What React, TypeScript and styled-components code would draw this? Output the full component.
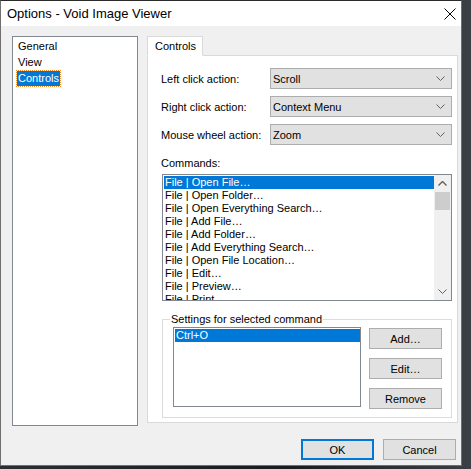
import React from 'react';
import styled, { createGlobalStyle } from 'styled-components';

const GlobalStyle = createGlobalStyle`
  html, body {
    margin: 0;
    padding: 0;
  }
  body {
    width: 471px;
    height: 469px;
    overflow: hidden;
    background: linear-gradient(90deg, #2a2f34 0%, #171b1f 60%, #3a4046 100%);
    font-family: "Liberation Sans", Arial, sans-serif;
    font-size: 11px;
    color: #000;
  }
`;

const Win = styled.div`
  width: 462px;
  height: 466px;
  box-sizing: border-box;
  border: 1px solid #6f6f6f;
  border-top-color: #2b2b2b;
  background: #f0f0f0;
  display: flex;
  flex-direction: column;
`;

const TitleBar = styled.div`
  height: 25px;
  flex: none;
  background: #fff;
  display: flex;
  align-items: center;
  justify-content: space-between;
  padding: 0 4px 0 6px;
  font-size: 13px;
`;

const CloseBtn = styled.div`
  width: 14px;
  height: 14px;
  display: flex;
  align-items: center;
  justify-content: center;
`;

const Body = styled.div`
  display: flex;
  gap: 9px;
  padding: 10px 3px 0 11px;
`;

const SideList = styled.ul`
  list-style: none;
  margin: 0;
  padding: 1px 4px;
  width: 126px;
  height: 390px;
  box-sizing: border-box;
  background: #fff;
  border: 1px solid #828790;
`;

const SideItem = styled.li<{ $active?: boolean }>`
  height: 16px;
  line-height: 16px;
  span {
    display: inline-block;
    padding: 0 1px;
    line-height: 15px;
    background: ${({ $active }) => ($active ? '#0078d7' : 'transparent')};
    color: ${({ $active }) => ($active ? '#fff' : '#000')};
    outline: ${({ $active }) => ($active ? '1px dotted #f08a24' : 'none')};
  }
`;

const TabArea = styled.div`
  width: 311px;
  display: flex;
  flex-direction: column;
`;

const Tab = styled.div`
  width: 56px;
  height: 20px;
  box-sizing: border-box;
  border: 1px solid #d9d9d9;
  border-bottom: 1px solid #fff;
  background: #fff;
  margin-bottom: -1px;
  position: relative;
  z-index: 1;
  padding-left: 7px;
  line-height: 19px;
`;

const Panel = styled.div`
  height: 368px;
  box-sizing: border-box;
  border: 1px solid #d9d9d9;
  background: #fff;
  padding: 12px 5px 0 13px;
`;

const ActionGrid = styled.div`
  display: grid;
  grid-template-columns: 109px 182px;
  grid-auto-rows: 21px;
  row-gap: 7px;
  align-items: center;
`;

const Combo = styled.div`
  height: 21px;
  box-sizing: border-box;
  border: 1px solid #adadad;
  background: #e1e1e1;
  display: flex;
  align-items: center;
  justify-content: space-between;
  padding: 0 6px 0 2px;
`;

const SectionLabel = styled.div`
  margin-top: 11px;
  height: 18px;
  line-height: 14px;
`;

const ListBox = styled.div<{ $w: number; $h: number; $indent?: number }>`
  width: ${({ $w }) => $w}px;
  height: ${({ $h }) => $h}px;
  margin-left: ${({ $indent }) => $indent ?? 0}px;
  flex: none;
  box-sizing: border-box;
  border: 1px solid #828790;
  background: #fff;
  display: flex;
  overflow: hidden;
`;

const Items = styled.div`
  flex: 1;
  padding: 1px 0 0 1px;
  overflow: hidden;
`;

const Row = styled.div<{ $selected?: boolean }>`
  height: 13px;
  line-height: 13px;
  padding-left: 1px;
  white-space: nowrap;
  background: ${({ $selected }) => ($selected ? '#0078d7' : 'transparent')};
  color: ${({ $selected }) => ($selected ? '#fff' : '#000')};
`;

const ScrollBar = styled.div`
  width: 17px;
  flex: none;
  background: #f0f0f0;
  display: flex;
  flex-direction: column;
`;

const ScrollArrow = styled.div`
  height: 17px;
  display: flex;
  align-items: center;
  justify-content: center;
`;

const Thumb = styled.div`
  height: 18px;
  margin: 0 1px;
  background: #cdcdcd;
`;

const Track = styled.div`
  flex: 1;
`;

const GroupBox = styled.fieldset`
  margin: 11px 0 0 1px;
  width: 290px;
  height: 106px;
  box-sizing: border-box;
  border: 1px solid #dcdcdc;
  padding: 1px 9px 0 10px;
  display: flex;
  gap: 8px;

  legend {
    padding: 0 1px;
    margin-left: -3px;
    line-height: 14px;
  }
`;

const ButtonColumn = styled.div`
  display: flex;
  flex-direction: column;
  gap: 9px;
  padding-top: 1px;
`;

const Button = styled.button<{ $default?: boolean }>`
  width: 73px;
  height: 21px;
  box-sizing: border-box;
  margin: 0;
  padding: 0;
  font-family: inherit;
  font-size: 11px;
  color: #000;
  background: #e1e1e1;
  border: ${({ $default }) => ($default ? '2px solid #0078d7' : '1px solid #adadad')};
`;

const Footer = styled.div`
  display: flex;
  justify-content: flex-end;
  gap: 9px;
  padding: 13px 5px 0 0;
`;

const Chevron: React.FC<{ up?: boolean }> = ({ up }) => (
  <svg width="9" height="5" viewBox="0 0 9 5">
    <polyline
      points={up ? '0.5,4.5 4.5,0.5 8.5,4.5' : '0.5,0.5 4.5,4.5 8.5,0.5'}
      fill="none"
      stroke="#606060"
      strokeWidth={up ? 1.4 : 1}
    />
  </svg>
);

const actions = [
  ['Left click action:', 'Scroll'],
  ['Right click action:', 'Context Menu'],
  ['Mouse wheel action:', 'Zoom'],
];

const commands = [
  'File | Open File…',
  'File | Open Folder…',
  'File | Open Everything Search…',
  'File | Add File…',
  'File | Add Folder…',
  'File | Add Everything Search…',
  'File | Open File Location…',
  'File | Edit…',
  'File | Preview…',
  'File | Print…',
];

export default function App() {
  return (
    <>
      <GlobalStyle />
      <Win>
        <TitleBar>
          <span>Options - Void Image Viewer</span>
          <CloseBtn>
            <svg width="12" height="12" viewBox="0 0 12 12">
              <path d="M0.5 0.5 L11.5 11.5 M11.5 0.5 L0.5 11.5" stroke="#000" strokeWidth="1" />
            </svg>
          </CloseBtn>
        </TitleBar>
        <Body>
          <SideList>
            <SideItem><span>General</span></SideItem>
            <SideItem><span>View</span></SideItem>
            <SideItem $active><span>Controls</span></SideItem>
          </SideList>
          <TabArea>
            <Tab>Controls</Tab>
            <Panel>
              <ActionGrid>
                {actions.map(([label, value]) => (
                  <React.Fragment key={label}>
                    <span>{label}</span>
                    <Combo>
                      <span>{value}</span>
                      <Chevron />
                    </Combo>
                  </React.Fragment>
                ))}
              </ActionGrid>
              <SectionLabel>Commands:</SectionLabel>
              <ListBox $w={290} $h={127} $indent={1}>
                <Items>
                  {commands.map((c, i) => (
                    <Row key={c} $selected={i === 0}>{c}</Row>
                  ))}
                </Items>
                <ScrollBar>
                  <ScrollArrow><Chevron up /></ScrollArrow>
                  <Thumb />
                  <Track />
                  <ScrollArrow><Chevron /></ScrollArrow>
                </ScrollBar>
              </ListBox>
              <GroupBox>
                <legend>Settings for selected command</legend>
                <ListBox $w={188} $h={80}>
                  <Items>
                    <Row $selected>Ctrl+O</Row>
                  </Items>
                </ListBox>
                <ButtonColumn>
                  <Button>Add…</Button>
                  <Button>Edit…</Button>
                  <Button>Remove</Button>
                </ButtonColumn>
              </GroupBox>
            </Panel>
          </TabArea>
        </Body>
        <Footer>
          <Button $default>OK</Button>
          <Button>Cancel</Button>
        </Footer>
      </Win>
    </>
  );
}
